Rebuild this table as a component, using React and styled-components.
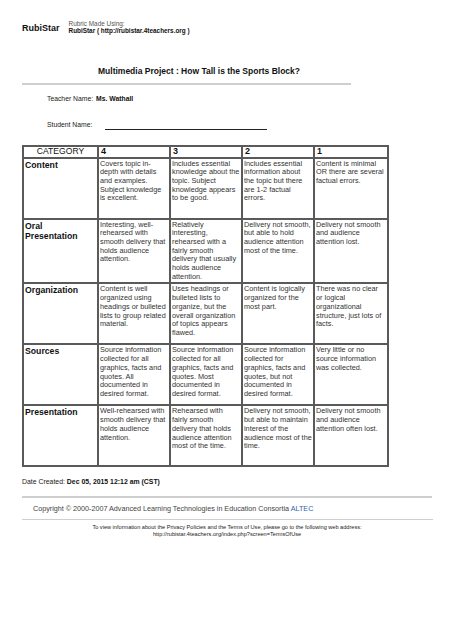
import React from 'react';
import styled, { createGlobalStyle } from 'styled-components';

const GlobalStyle = createGlobalStyle`
  html, body {
    margin: 0;
    padding: 0;
    background: #fff;
  }
  body {
    font-family: "Liberation Sans", Arial, sans-serif;
    color: #111;
  }
`;

const Page = styled.div`
  width: 453px;
  height: 640px;
  padding: 20px 0 0 22px;
  box-sizing: border-box;
`;

const Brand = styled.div`
  display: flex;
  align-items: flex-start;
  gap: 9px;
`;

const Logo = styled.div`
  font-size: 9px;
  font-weight: bold;
  padding-top: 3px;
`;

const MadeWith = styled.div`
  font-size: 6.4px;
  line-height: 7px;
  color: #555;
  b {
    color: #111;
  }
`;

const Title = styled.div`
  width: 354px;
  margin-top: 32px;
  text-align: center;
  font-size: 8.5px;
  font-weight: bold;
`;

const Rule = styled.div`
  width: ${(p) => p.$width}px;
  height: 1.5px;
  background: #cfcfcf;
  margin-top: ${(p) => p.$top}px;
`;

const Field = styled.div`
  display: flex;
  align-items: flex-end;
  margin: ${(p) => p.$top}px 0 0 25px;
  font-size: 6.8px;
  color: #222;
  b {
    margin-left: 3px;
    color: #111;
  }
`;

const Blank = styled.span`
  width: 162px;
  margin-left: 13px;
  border-bottom: 1px solid #222;
  margin-bottom: -2px;
`;

const Rubric = styled.table`
  margin-top: 17px;
  width: 365px;
  border-collapse: collapse;
  table-layout: fixed;
  border: 2px solid #555;
`;

const Cell = styled.td`
  border: 2px solid #5a5a5a;
  vertical-align: top;
  padding: 1px;
  font-size: 7.3px;
  line-height: 8.7px;
  color: #333;
  overflow: hidden;
`;

const HeadCell = styled(Cell)`
  vertical-align: middle;
  padding: 0 2px;
  font-size: ${(p) => (p.$center ? '8.6px' : '9px')};
  line-height: 9px;
  font-weight: ${(p) => (p.$center ? 'normal' : 'bold')};
  text-align: ${(p) => (p.$center ? 'center' : 'left')};
  color: #111;
`;

const CategoryCell = styled(Cell)`
  font-size: 8.7px;
  line-height: 10.3px;
  font-weight: bold;
  color: #111;
`;

const Row = styled.tr`
  height: ${(p) => p.$h}px;
`;

const Created = styled.div`
  margin-top: 11px;
  font-size: 6.9px;
  color: #222;
  b {
    color: #111;
  }
`;

const Copyright = styled.div`
  margin: 6px 0 0 11px;
  font-size: 7.2px;
  color: #444;
  a {
    color: #3a62b0;
    text-decoration: none;
  }
`;

const Terms = styled.div`
  width: 410px;
  margin-top: 4px;
  text-align: center;
  font-size: 5.6px;
  line-height: 6.5px;
  color: #222;
`;

const rows = [
  {
    name: 'Content',
    h: 61,
    cells: [
      'Covers topic in-depth with details and examples. Subject knowledge is excellent.',
      'Includes essential knowledge about the topic. Subject knowledge appears to be good.',
      'Includes essential information about the topic but there are 1-2 factual errors.',
      'Content is minimal OR there are several factual errors.',
    ],
  },
  {
    name: 'Oral Presentation',
    h: 63,
    cells: [
      'Interesting, well-rehearsed with smooth delivery that holds audience attention.',
      'Relatively interesting, rehearsed with a fairly smooth delivery that usually holds audience attention.',
      'Delivery not smooth, but able to hold audience attention most of the time.',
      'Delivery not smooth and audience attention lost.',
    ],
  },
  {
    name: 'Organization',
    h: 61,
    cells: [
      'Content is well organized using headings or bulleted lists to group related material.',
      'Uses headings or bulleted lists to organize, but the overall organization of topics appears flawed.',
      'Content is logically organized for the most part.',
      'There was no clear or logical organizational structure, just lots of facts.',
    ],
  },
  {
    name: 'Sources',
    h: 61,
    cells: [
      'Source information collected for all graphics, facts and quotes. All documented in desired format.',
      'Source information collected for all graphics, facts and quotes. Most documented in desired format.',
      'Source information collected for graphics, facts and quotes, but not documented in desired format.',
      'Very little or no source information was collected.',
    ],
  },
  {
    name: 'Presentation',
    h: 61,
    cells: [
      'Well-rehearsed with smooth delivery that holds audience attention.',
      'Rehearsed with fairly smooth delivery that holds audience attention most of the time.',
      'Delivery not smooth, but able to maintain interest of the audience most of the time.',
      'Delivery not smooth and audience attention often lost.',
    ],
  },
];

const App = () => {
  return (
    <Page>
      <GlobalStyle />
      <Brand>
        <Logo>RubiStar</Logo>
        <MadeWith>
          Rubric Made Using:
          <br />
          <b>RubiStar ( http://rubistar.4teachers.org )</b>
        </MadeWith>
      </Brand>
      <Title>Multimedia Project : How Tall is the Sports Block?</Title>
      <Rule $width={329} $top={7} />
      <Field $top={10}>
        Teacher Name: <b>Ms. Wathall</b>
      </Field>
      <Field $top={19}>
        Student Name:
        <Blank />
      </Field>

      <Rubric>
        <colgroup>
          <col style={{ width: 75 }} />
          <col style={{ width: 72 }} />
          <col style={{ width: 72 }} />
          <col style={{ width: 72 }} />
          <col style={{ width: 74 }} />
        </colgroup>
        <tbody>
          <Row $h={12}>
            <HeadCell $center>CATEGORY</HeadCell>
            <HeadCell>4</HeadCell>
            <HeadCell>3</HeadCell>
            <HeadCell>2</HeadCell>
            <HeadCell>1</HeadCell>
          </Row>
          {rows.map((row) => (
            <Row $h={row.h} key={row.name}>
              <CategoryCell>{row.name}</CategoryCell>
              {row.cells.map((text, i) => (
                <Cell key={i}>{text}</Cell>
              ))}
            </Row>
          ))}
        </tbody>
      </Rubric>

      <Created>
        Date Created: <b>Dec 05, 2015 12:12 am (CST)</b>
      </Created>
      <Rule $width={410} $top={11} />
      <Copyright>
        Copyright © 2000-2007 Advanced Learning Technologies in Education Consortia <a href="#altec">ALTEC</a>
      </Copyright>
      <Rule $width={411} $top={6} />
      <Terms>
        To view information about the Privacy Policies and the Terms of Use, please go to the following web address:
        <br />
        http://rubistar.4teachers.org/index.php?screen=TermsOfUse
      </Terms>
    </Page>
  );
};

export default App;
